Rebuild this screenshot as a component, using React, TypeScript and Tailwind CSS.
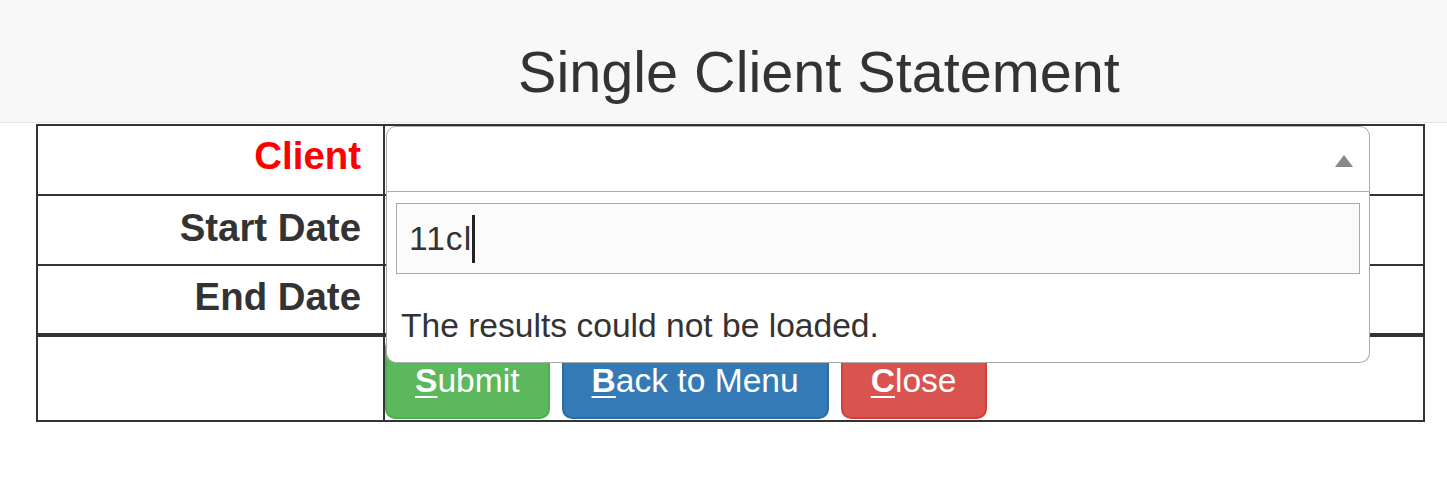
import React from "react";

function Btn({ first, rest, cls }: { first: string; rest: string; cls: string }) {
  return (
    <button
      className={`h-[82px] border-2 rounded-[10px] px-[28px] pt-[6px] text-white text-[33.6px] leading-[48px] flex items-center ${cls}`}
    >
      <span className="font-bold underline decoration-[2px] underline-offset-[4px]">{first}</span>
      <span>{rest}</span>
    </button>
  );
}

export default function App() {
  return (
    <div className="min-h-[485px] bg-white font-['Liberation_Sans',Arial,sans-serif] text-[#333]">
      <header className="h-[123px] bg-[#f8f8f8] border-b border-[#e7e7e7] flex items-center pt-[24px] pl-[518px]">
        <h1 className="text-[57.6px] font-normal leading-[1.1] text-[#333]">Single Client Statement</h1>
      </header>

      <div className="ml-[36px] mt-[1px] w-[1389px] border-2 border-[#333]">
        {/* Client row */}
        <div className="flex h-[70px] border-b-2 border-[#333]">
          <div className="w-[347px] border-r-2 border-[#333] flex items-center justify-end pr-[22px] pb-[8px]">
            <span className="text-[38.4px] font-bold text-[#ff0000]">Client</span>
          </div>
          <div className="flex-1 relative">
            <div className="ml-[1px] w-[984px] h-[66px] border border-[#aaa] rounded-t-[10px] bg-white relative">
              <span className="absolute right-[16px] top-[28px] w-0 h-0 border-l-[9.6px] border-r-[9.6px] border-b-[12px] border-l-transparent border-r-transparent border-b-[#888]" />
            </div>
            <div className="absolute left-[1px] top-[66px] w-[984px] z-10 bg-white border border-t-0 border-[#aaa] rounded-b-[10px]">
              <div className="pt-[11px] px-[9px] pb-[10px]">
                <div className="h-[71px] border border-[#aaa] bg-[#fbfbfb] flex items-center pl-[12px] pt-[2px] text-[33.6px] text-[#333]">
                  <span className="tracking-[1px]">11cl</span>
                  <span className="inline-block w-[3px] h-[48px] bg-[#222] -mt-[2px]" />
                </div>
              </div>
              <div className="pt-[18px] pb-[12px] px-[14px] leading-[48px] text-[33.6px] text-[#333]">
                The results could not be loaded.
              </div>
            </div>
          </div>
        </div>

        {/* Start Date */}
        <div className="flex h-[70px] border-b-2 border-[#333]">
          <div className="w-[347px] border-r-2 border-[#333] flex items-center justify-end pr-[22px] pb-[4px]">
            <span className="text-[38.4px] font-bold">Start Date</span>
          </div>
          <div className="flex-1" />
        </div>

        {/* End Date */}
        <div className="flex h-[69px] border-b-2 border-[#333]">
          <div className="w-[347px] border-r-2 border-[#333] flex items-center justify-end pr-[22px] pb-[6px]">
            <span className="text-[38.4px] font-bold">End Date</span>
          </div>
          <div className="flex-1" />
        </div>

        {/* Buttons */}
        <div className="flex h-[85px] border-t-2 border-[#333]">
          <div className="w-[347px] border-r-2 border-[#333]" />
          <div className="flex-1 flex items-start gap-[12px]">
            <Btn first="S" rest="ubmit" cls="bg-[#5cb85c] border-[#4cae4c]" />
            <Btn first="B" rest="ack to Menu" cls="bg-[#337ab7] border-[#2e6da4]" />
            <Btn first="C" rest="lose" cls="bg-[#d9534f] border-[#d43f3a]" />
          </div>
        </div>
      </div>
    </div>
  );
}
